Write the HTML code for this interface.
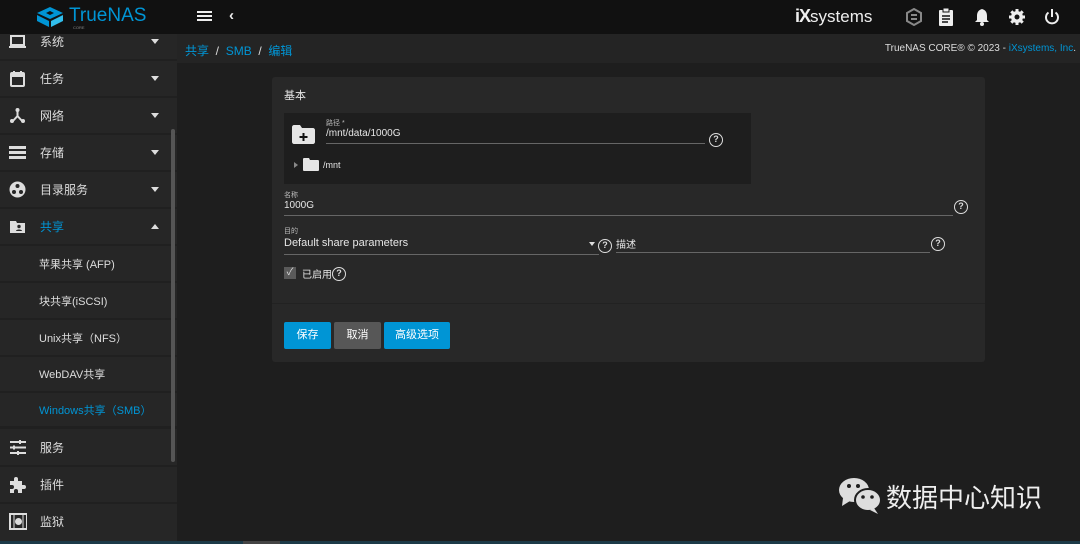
<!DOCTYPE html>
<html><head><meta charset="utf-8">
<style>
*{box-sizing:border-box;margin:0;padding:0}
body{width:1080px;height:544px;overflow:hidden;background:#1e1e1e;font-family:"Liberation Sans","Noto Sans CJK SC",sans-serif;color:#e6e6e6;position:relative}
.top{position:absolute;left:0;top:0;width:1080px;height:34px;background:#111}
.side{position:absolute;left:0;top:34px;width:177px;height:507px;background:#262626;overflow:hidden}
.item{position:absolute;left:0;width:177px;height:37px;border-bottom:2px solid #202020;font-size:12px;color:#ddd}
.item .ic{position:absolute;left:9px;top:9px;width:17px;height:17px}
.item .t{position:absolute;left:40px;top:9px}
.item .ar{position:absolute;left:151px;top:15px;width:0;height:0;border-left:4px solid transparent;border-right:4px solid transparent;border-top:5px solid #ddd}
.sub .t{left:39px;font-size:11px;top:10px}
.bc{position:absolute;left:177px;top:34px;width:903px;height:29px;background:#242424;font-size:12px}
.card{position:absolute;left:272px;top:77px;width:713px;height:285px;background:#282828;border-radius:3px}
.q{position:absolute;width:14px;height:14px;border:1.5px solid #ddd;border-radius:50%;font-size:9px;font-weight:bold;text-align:center;line-height:11px;color:#ddd}
.line{position:absolute;height:1px;background:#666}
.lbl{position:absolute;font-size:7px;color:#bbb}
.val{position:absolute;font-size:10px;color:#e6e6e6}
.btn{position:absolute;top:322px;height:27px;border-radius:2px;font-size:11px;color:#fff;text-align:center;line-height:27px}
</style></head><body>
<div class="top">
 <svg style="position:absolute;left:36px;top:6px" width="28" height="22" viewBox="0 0 28 22"><path d="M14 1 L27 7 L14 13 L1 7Z" fill="#0095d5"/><path d="M1 9 L13 15 L13 21 L1 15Z" fill="#0095d5"/><path d="M27 9 L15 15 L15 21 L27 15Z" fill="#31beec"/><path d="M14 5 L18 7 L14 9 L10 7Z" fill="#111"/></svg>
 <div style="position:absolute;left:69px;top:5px;font-size:19px;color:#0095d5">TrueNAS</div>
 <div style="position:absolute;left:73px;top:25px;font-size:4px;color:#888">CORE</div>
 <div style="position:absolute;left:197px;top:11px;width:15px;height:2px;background:#eee;box-shadow:0 4px 0 #eee,0 8px 0 #eee"></div>
 <div style="position:absolute;left:229px;top:7px;font-size:15px;font-weight:bold;color:#eee">‹</div>
 <div style="position:absolute;left:795px;top:6px;font-size:18px;color:#eee;font-weight:bold;letter-spacing:-1px">iX<span style="font-weight:normal;font-size:17px;letter-spacing:0">systems</span></div>
 <svg style="position:absolute;left:906px;top:8px" width="16" height="18" viewBox="0 0 16 18"><path d="M8 1L15 5V13L8 17L1 13V5Z" fill="none" stroke="#888" stroke-width="2"/><path d="M5 7H11M5 11H11" stroke="#888" stroke-width="2"/></svg>
 <svg style="position:absolute;left:938px;top:8px" width="16" height="18" viewBox="0 0 16 18"><rect x="1" y="2" width="14" height="16" rx="1" fill="#eee"/><rect x="5" y="0" width="6" height="4" fill="#eee" stroke="#111"/><path d="M4 8H12M4 11H12M4 14H10" stroke="#111" stroke-width="1.5"/></svg>
 <svg style="position:absolute;left:974px;top:8px" width="16" height="18" viewBox="0 0 16 18"><path d="M8 1C4 2 3 5 3 8V12L1 14H15L13 12V8C13 5 12 2 8 1Z" fill="#eee"/><circle cx="8" cy="16" r="2" fill="#eee"/></svg>
 <svg style="position:absolute;left:1008px;top:8px" width="18" height="18" viewBox="0 0 18 18"><circle cx="9" cy="9" r="6" fill="#eee"/><path d="M9 1V17M1 9H17M3.3 3.3L14.7 14.7M14.7 3.3L3.3 14.7" stroke="#eee" stroke-width="3"/><circle cx="9" cy="9" r="2.5" fill="#111"/></svg>
 <svg style="position:absolute;left:1044px;top:8px" width="16" height="18" viewBox="0 0 16 18"><path d="M4.5 4.5A6 6 0 1 0 11.5 4.5" fill="none" stroke="#eee" stroke-width="2"/><path d="M8 1V9" stroke="#eee" stroke-width="2"/></svg>
</div>
<div class="side">
 <div class="item" style="top:-10px"><svg class="ic" viewBox="0 0 17 17"><rect x="2" y="3" width="13" height="9" fill="none" stroke="#ddd" stroke-width="2"/><rect x="0" y="13" width="17" height="2" fill="#ddd"/></svg><span class="t">系统</span><span class="ar"></span></div>
 <div class="item" style="top:27px"><svg class="ic" viewBox="0 0 17 17"><rect x="2" y="3" width="13" height="13" rx="1" fill="none" stroke="#ddd" stroke-width="2"/><rect x="2" y="3" width="13" height="4" fill="#ddd"/><path d="M5 1V4M12 1V4" stroke="#ddd" stroke-width="2"/></svg><span class="t">任务</span><span class="ar"></span></div>
 <div class="item" style="top:64px"><svg class="ic" viewBox="0 0 17 17"><path d="M8.5 2V9L3 15M8.5 9L14 15" stroke="#ddd" stroke-width="2" fill="none"/><circle cx="8.5" cy="3" r="2" fill="#ddd"/><circle cx="3" cy="14" r="2" fill="#ddd"/><circle cx="14" cy="14" r="2" fill="#ddd"/></svg><span class="t">网络</span><span class="ar"></span></div>
 <div class="item" style="top:101px"><svg class="ic" viewBox="0 0 17 17"><rect x="0" y="2" width="17" height="3" fill="#ddd"/><rect x="0" y="7" width="17" height="3" fill="#ddd"/><rect x="0" y="12" width="17" height="3" fill="#ddd"/></svg><span class="t">存储</span><span class="ar"></span></div>
 <div class="item" style="top:138px"><svg class="ic" viewBox="0 0 17 17"><circle cx="8.5" cy="8.5" r="8" fill="#ddd"/><circle cx="8.5" cy="5" r="2" fill="#262626"/><circle cx="5" cy="11" r="2" fill="#262626"/><circle cx="12" cy="11" r="2" fill="#262626"/></svg><span class="t">目录服务</span><span class="ar"></span></div>
 <div class="item" style="top:175px"><svg class="ic" viewBox="0 0 17 17"><path d="M1 3H7L8 5H16V15H1Z" fill="#ddd"/><circle cx="10" cy="8.5" r="1.7" fill="#262626"/><path d="M7 13C7 11 13 11 13 13Z" fill="#262626"/></svg><span class="t" style="color:#0095d5">共享</span><span class="ar" style="border-top:0;border-bottom:5px solid #ddd"></span></div>
 <div class="item sub" style="top:212px"><span class="t">苹果共享 (AFP)</span></div>
 <div class="item sub" style="top:249px"><span class="t">块共享(iSCSI)</span></div>
 <div class="item sub" style="top:286px"><span class="t">Unix共享（NFS）</span></div>
 <div class="item sub" style="top:322px"><span class="t">WebDAV共享</span></div>
 <div class="item sub" style="top:358px;border-bottom-width:3px"><span class="t" style="color:#0095d5">Windows共享（SMB）</span></div>
 <div class="item" style="top:396px"><svg class="ic" viewBox="0 0 17 17"><path d="M1 3H17M1 8.5H17M1 14H17" stroke="#ddd" stroke-width="2"/><path d="M11 1V5M5 6.5V10.5M9 12V16" stroke="#ddd" stroke-width="2"/></svg><span class="t">服务</span></div>
 <div class="item" style="top:433px"><svg class="ic" viewBox="0 0 17 17"><path d="M1 5H5V3A2 2 0 0 1 9 3V5H13V9H15A2 2 0 0 1 15 13H13V17H9V15A2 2 0 0 0 5 15V17H1V13H3A2 2 0 0 0 3 9H1Z" fill="#ddd"/></svg><span class="t">插件</span></div>
 <div class="item" style="top:470px;border:0"><svg class="ic" viewBox="0 0 17 17" style="width:19px;left:8px"><rect x="1" y="1" width="17" height="15" fill="none" stroke="#ddd" stroke-width="2"/><circle cx="9.5" cy="8.5" r="3.5" fill="#ddd"/><path d="M5 1V16M14 1V16" stroke="#ddd"/></svg><span class="t">监狱</span></div>
 <div style="position:absolute;left:171px;top:95px;width:4px;height:333px;background:#555;border-radius:2px"></div>
</div>
<div style="position:absolute;left:0;top:541px;width:1080px;height:3px;background:#1c3a48"></div>
<div style="position:absolute;left:243px;top:541px;width:37px;height:3px;background:#444"></div>
<div class="bc"><span style="position:absolute;left:8px;top:8px;color:#0095d5">共享 <span style="color:#ddd">&nbsp;/&nbsp;</span> SMB <span style="color:#ddd">&nbsp;/&nbsp;</span> 编辑</span>
 <span style="position:absolute;right:4px;top:9px;font-size:10px;color:#ddd">TrueNAS CORE® © 2023 - <span style="color:#0095d5">iXsystems, Inc</span>.</span></div>
<div class="card">
 <div style="position:absolute;left:12px;top:10px;font-size:11px">基本</div>
 <div style="position:absolute;left:12px;top:36px;width:467px;height:71px;background:#1e1e1e"></div>
 <svg style="position:absolute;left:20px;top:48px" width="23" height="19" viewBox="0 0 23 19"><path d="M0 2C0 1 1 0 2 0H8L10 3H21C22 3 23 4 23 5V17C23 18 22 19 21 19H2C1 19 0 18 0 17Z" fill="#e6e6e6"/><path d="M11.5 8V16M7.5 12H15.5" stroke="#111" stroke-width="2"/></svg>
 <div class="lbl" style="left:54px;top:41px">路径 *</div>
 <div class="val" style="left:54px;top:51px">/mnt/data/1000G</div>
 <div class="line" style="left:54px;top:66px;width:379px"></div>
 <div class="q" style="left:437px;top:56px">?</div>
 <div style="position:absolute;left:22px;top:85px;width:0;height:0;border-top:3px solid transparent;border-bottom:3px solid transparent;border-left:4px solid #888"></div>
 <svg style="position:absolute;left:31px;top:81px" width="16" height="13" viewBox="0 0 16 13"><path d="M0 1C0 0.5 0.5 0 1 0H6L7 2H15C15.5 2 16 2.5 16 3V12C16 12.5 15.5 13 15 13H1C0.5 13 0 12.5 0 12Z" fill="#e6e6e6"/></svg>
 <div class="val" style="left:51px;top:83px;font-size:9px">/mnt</div>
 <div class="lbl" style="left:12px;top:113px">名称</div>
 <div class="val" style="left:12px;top:123px">1000G</div>
 <div class="line" style="left:12px;top:138px;width:669px"></div>
 <div class="q" style="left:682px;top:123px">?</div>
 <div class="lbl" style="left:12px;top:149px">目的</div>
 <div class="val" style="left:12px;top:160px;font-size:11px">Default share parameters</div>
 <div style="position:absolute;left:317px;top:165px;width:0;height:0;border-left:3px solid transparent;border-right:3px solid transparent;border-top:4px solid #ddd"></div>
 <div class="line" style="left:12px;top:177px;width:315px"></div>
 <div class="q" style="left:326px;top:162px">?</div>
 <div class="val" style="left:344px;top:159px">描述</div>
 <div class="line" style="left:344px;top:175px;width:314px"></div>
 <div class="q" style="left:659px;top:160px">?</div>
 <div style="position:absolute;left:12px;top:190px;width:12px;height:12px;background:#5a5a5a;color:#ddd;font-size:10px;line-height:12px;text-align:center">✓</div>
 <div class="val" style="left:30px;top:189px">已启用</div>
 <div class="q" style="left:60px;top:190px">?</div>
 <div style="position:absolute;left:0;top:226px;width:713px;height:1px;background:#222"></div>
</div>
<div class="btn" style="left:284px;width:47px;background:#0095d5">保存</div>
<div class="btn" style="left:334px;width:47px;background:#575757">取消</div>
<div class="btn" style="left:384px;width:66px;background:#0095d5">高级选项</div>
<svg style="position:absolute;left:838px;top:476px" width="44" height="38" viewBox="0 0 44 38"><ellipse cx="16" cy="14" rx="15" ry="12" fill="#ddd"/><path d="M5 22L4 30L12 25Z" fill="#ddd"/><circle cx="11" cy="10" r="2" fill="#1e1e1e"/><circle cx="20" cy="10" r="2" fill="#1e1e1e"/><ellipse cx="30" cy="24" rx="13" ry="11" stroke="#1e1e1e" stroke-width="2" fill="#ddd"/><path d="M36 32L40 38L32 34Z" fill="#ddd"/><circle cx="25" cy="21" r="1.8" fill="#1e1e1e"/><circle cx="34" cy="21" r="1.8" fill="#1e1e1e"/></svg>
<div style="position:absolute;left:886px;top:478px;font-size:26px;color:#eee;font-family:'Noto Sans CJK SC',sans-serif">数据中心知识</div>
</body></html>
